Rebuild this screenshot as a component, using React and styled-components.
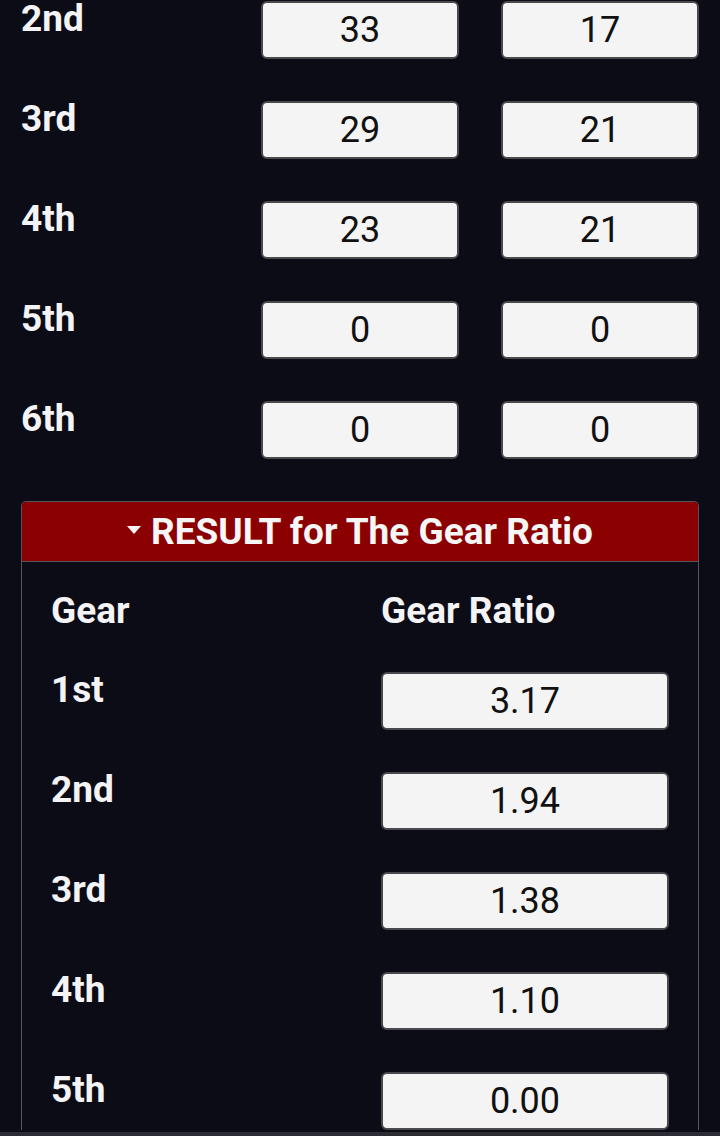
import React from 'react';
import styled, { createGlobalStyle } from 'styled-components';

const GlobalStyle = createGlobalStyle`
  html, body {
    margin: 0;
    padding: 0;
    background-color: #0c0c16;
    overflow: hidden;
  }
  body {
    font-family: Roboto, 'Liberation Sans', sans-serif;
    color: #f4f4f6;
  }
`;

const Page = styled.div`
  padding: 1px 21px 0 21px;
  height: 1136px;
  box-sizing: border-box;
`;

const InputGrid = styled.div`
  display: grid;
  grid-template-columns: 198px 198px 198px;
  column-gap: 42px;
  row-gap: 42px;
`;

const Label = styled.div`
  font-size: 37px;
  line-height: 36px;
  font-weight: 700;
  color: #f4f4f6;
`;

const ValueBox = styled.div`
  height: 58px;
  box-sizing: border-box;
  background-color: #f4f4f4;
  border: 2px solid #4a4a4e;
  border-radius: 6px;
  color: #111;
  font-size: 36px;
  display: flex;
  align-items: center;
  justify-content: center;
`;

const Panel = styled.div`
  margin-top: 42px;
  border: 1px solid #55555a;
  border-bottom: none;
  border-radius: 5px 5px 0 0;
`;

const PanelHeader = styled.div`
  height: 59px;
  background-color: #8b0000;
  border-bottom: 1px solid #55555a;
  border-radius: 4px 4px 0 0;
  display: flex;
  align-items: center;
  justify-content: center;
  font-size: 37px;
  font-weight: 700;
  color: #f6f6f6;
`;

const Caret = styled.span`
  width: 0;
  height: 0;
  border-left: 7px solid transparent;
  border-right: 7px solid transparent;
  border-top: 8px solid #f6f6f6;
  margin-right: 10px;
  margin-top: -4px;
`;

const PanelBody = styled.div`
  padding: 31px 29px 0 29px;
`;

const ResultGrid = styled.div`
  display: grid;
  grid-template-columns: 330px 288px;
  row-gap: 42px;
`;

const HeadCell = styled(Label)`
  margin-bottom: 1px;
`;

const BottomBar = styled.div`
  position: fixed;
  left: 0;
  right: 0;
  bottom: 0;
  height: 4px;
  background-color: #2c2c34;
`;

const inputs = [
  ['2nd', 33, 17],
  ['3rd', 29, 21],
  ['4th', 23, 21],
  ['5th', 0, 0],
  ['6th', 0, 0],
];

const ratios = [
  ['1st', '3.17'],
  ['2nd', '1.94'],
  ['3rd', '1.38'],
  ['4th', '1.10'],
  ['5th', '0.00'],
];

export default function App() {
  return (
    <>
      <GlobalStyle />
      <Page>
        <InputGrid>
          {inputs.map(([gear, a, b]) => (
            <React.Fragment key={gear}>
              <Label>{gear}</Label>
              <ValueBox>{a}</ValueBox>
              <ValueBox>{b}</ValueBox>
            </React.Fragment>
          ))}
        </InputGrid>

        <Panel>
          <PanelHeader>
            <Caret />
            RESULT for The Gear Ratio
          </PanelHeader>
          <PanelBody>
            <ResultGrid>
              <HeadCell>Gear</HeadCell>
              <HeadCell>Gear Ratio</HeadCell>
              {ratios.map(([gear, r]) => (
                <React.Fragment key={gear}>
                  <Label>{gear}</Label>
                  <ValueBox>{r}</ValueBox>
                </React.Fragment>
              ))}
            </ResultGrid>
          </PanelBody>
        </Panel>
      </Page>
      <BottomBar />
    </>
  );
}
